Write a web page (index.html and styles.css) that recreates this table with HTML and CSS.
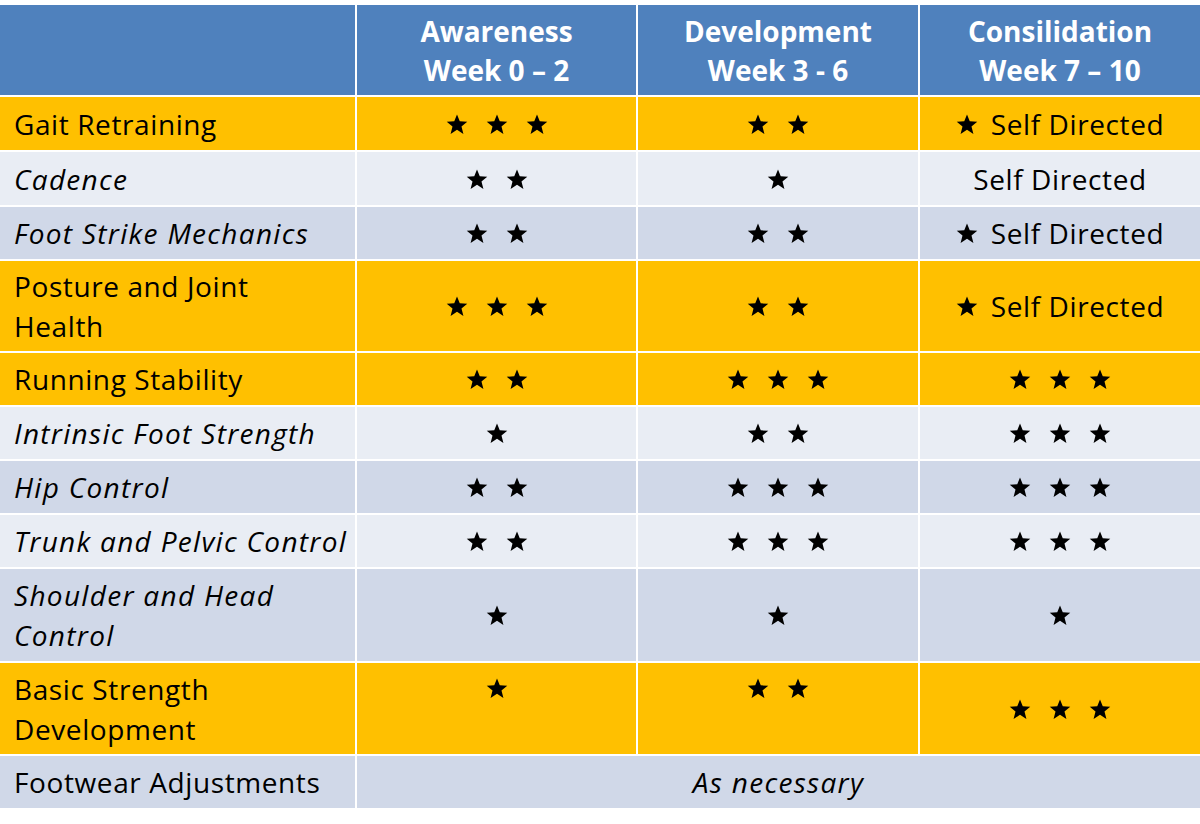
FILE: index.html
```html
<!DOCTYPE html>
<html lang="en">
<head>
    <meta charset="UTF-8">
    <title>Running Program Phases</title>
    <link rel="stylesheet" href="styles.css">
</head>
<body>
    <div class="chart">
        <!-- header -->
        <div class="cell head"></div>
        <div class="cell head">Awareness<br>Week 0 – 2</div>
        <div class="cell head">Development<br>Week 3 - 6</div>
        <div class="cell head">Consilidation<br>Week 7 – 10</div>

        <div class="cell label gold">Gait Retraining</div>
        <div class="cell gold"><span class="stars s3"></span></div>
        <div class="cell gold"><span class="stars s2"></span></div>
        <div class="cell gold"><span class="stars s1"></span><span class="note">Self Directed</span></div>

        <div class="cell label light sub">Cadence</div>
        <div class="cell light"><span class="stars s2"></span></div>
        <div class="cell light"><span class="stars s1"></span></div>
        <div class="cell light">Self Directed</div>

        <div class="cell label dim sub">Foot Strike Mechanics</div>
        <div class="cell dim"><span class="stars s2"></span></div>
        <div class="cell dim"><span class="stars s2"></span></div>
        <div class="cell dim"><span class="stars s1"></span><span class="note">Self Directed</span></div>

        <div class="cell label gold">Posture and Joint<br>Health</div>
        <div class="cell gold"><span class="stars s3"></span></div>
        <div class="cell gold"><span class="stars s2"></span></div>
        <div class="cell gold"><span class="stars s1"></span><span class="note">Self Directed</span></div>

        <div class="cell label gold">Running Stability</div>
        <div class="cell gold"><span class="stars s2"></span></div>
        <div class="cell gold"><span class="stars s3"></span></div>
        <div class="cell gold"><span class="stars s3"></span></div>

        <div class="cell label light sub">Intrinsic Foot Strength</div>
        <div class="cell light"><span class="stars s1"></span></div>
        <div class="cell light"><span class="stars s2"></span></div>
        <div class="cell light"><span class="stars s3"></span></div>

        <div class="cell label dim sub">Hip Control</div>
        <div class="cell dim"><span class="stars s2"></span></div>
        <div class="cell dim"><span class="stars s3"></span></div>
        <div class="cell dim"><span class="stars s3"></span></div>

        <div class="cell label light sub">Trunk and Pelvic Control</div>
        <div class="cell light"><span class="stars s2"></span></div>
        <div class="cell light"><span class="stars s3"></span></div>
        <div class="cell light"><span class="stars s3"></span></div>

        <div class="cell label dim sub">Shoulder and Head<br>Control</div>
        <div class="cell dim"><span class="stars s1"></span></div>
        <div class="cell dim"><span class="stars s1"></span></div>
        <div class="cell dim"><span class="stars s1"></span></div>

        <div class="cell label gold">Basic Strength<br>Development</div>
        <div class="cell gold top"><span class="stars s1"></span></div>
        <div class="cell gold top"><span class="stars s2"></span></div>
        <div class="cell gold"><span class="stars s3"></span></div>

        <div class="cell label dim">Footwear Adjustments</div>
        <div class="cell dim span3 sub">As necessary</div>
    </div>

    <script>
        // fill the star spans
        const star = '<svg viewBox="0 0 24 24"><path d="M12 1.5l3 7.6 8.2.5-6.3 5.2 2.1 8-7-4.4-7 4.4 2.1-8L.8 9.6 9 9.1z"/></svg>';
        document.querySelectorAll('.stars').forEach(el => {
            const n = el.classList.contains('s3') ? 3 : el.classList.contains('s2') ? 2 : 1;
            el.innerHTML = star.repeat(n);
        });
    </script>
</body>
</html>
```

FILE: styles.css
```css
body {
    margin: 0;
    background: #fff;
    font-family: "Open Sans", sans-serif;
}

.chart {
    display: grid;
    grid-template-columns: 355px 279px 280px 280px;
    grid-template-rows: 90px 53px 53px 52px 90px 52px 52px 52px 52px 92px 91px 52px;
    gap: 2px;
    margin-top: 5px;
    width: 1200px;
}

.cell {
    display: flex;
    align-items: center;
    justify-content: center;
    font-size: 28px;
    line-height: 40px;
    color: #000;
    letter-spacing: 0.6px;
}

.head {
    background-color: #4f81bd;
    color: #fff;
    font-weight: bold;
    text-align: center;
    line-height: 39px;
    padding-top: 2px;
    letter-spacing: 0;
}

.label {
    justify-content: flex-start;
    padding-left: 14px;
}

.sub {
    font-style: italic;
    letter-spacing: 1.3px;
}

.gold { background-color: #ffc000; }
.light { background-color: #e9edf4; }
.dim { background-color: #d0d8e8; }

.top {
    align-items: flex-start;
    padding-top: 14px;
}

.span3 {
    grid-column: span 3;
}

.stars {
    display: inline-flex;
    gap: 18px;
}

.stars svg {
    width: 22px;
    height: 22px;
    fill: #000;
    display: block;
}

.note {
    margin-left: 13px;
}
```
